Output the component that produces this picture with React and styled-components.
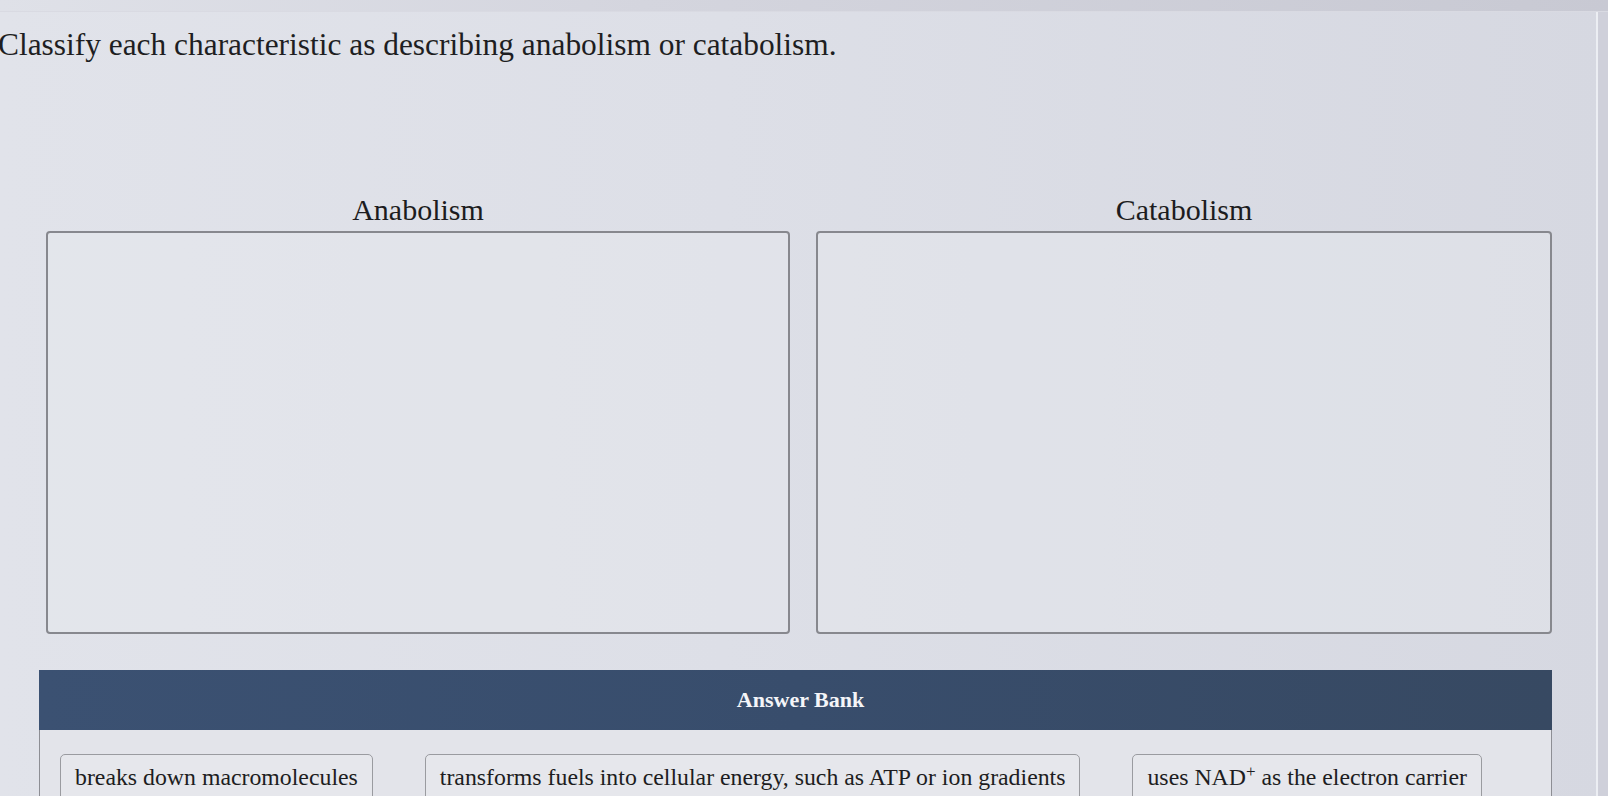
import React from "react";
import styled, { createGlobalStyle } from "styled-components";

const Global = createGlobalStyle`
  html, body { margin: 0; padding: 0; }
  body {
    background: #dcdee6;
    font-family: "Liberation Serif", "Times New Roman", serif;
    color: #1c1c1f;
  }
`;

const Screen = styled.div`
  width: 1608px;
  height: 796px;
  overflow: hidden;
  display: flex;
  flex-direction: column;
  background: linear-gradient(90deg, #e1e3ea 0%, #dddfe7 45%, #d6d8e1 100%);
`;

const TopBand = styled.div`
  height: 11px;
  flex: none;
  background: linear-gradient(90deg, #dfe1e8 0%, #d4d5de 40%, #c8c9d3 100%);
  border-bottom: 1px solid #d9dae2;
`;

const Body = styled.div`
  flex: 1;
  display: flex;
  min-height: 0;
`;

const Page = styled.main`
  flex: 1;
  display: flex;
  flex-direction: column;
  min-width: 0;
`;

const Edge = styled.div`
  width: 10px;
  flex: none;
  border-left: 2px solid #eceef3;
  background: #cfd0da;
`;

const Prompt = styled.h1`
  margin: 15px 0 0 -2px;
  font-size: 31.4px;
  line-height: 36px;
  font-weight: 400;
  color: #1e1e22;
  white-space: nowrap;
`;

const Bins = styled.div`
  margin: 130px 0 0 46px;
  width: 1506px;
  display: grid;
  grid-template-columns: 744px 736px;
  column-gap: 26px;
`;

const Bin = styled.section`
  display: flex;
  flex-direction: column;
  align-items: center;
  gap: 4px;
`;

const BinLabel = styled.h2`
  margin: 0;
  font-size: 30px;
  line-height: 34px;
  font-weight: 400;
  color: #1c1c20;
`;

const DropZone = styled.div`
  align-self: stretch;
  height: 399px;
  border: 2px solid #87888e;
  border-radius: 4px;
  background: rgba(230, 232, 238, 0.45);
`;

const Bank = styled.section`
  margin: 36px 0 0 39px;
  width: 1513px;
  display: flex;
  flex-direction: column;
`;

const BankHeader = styled.div`
  height: 60px;
  display: flex;
  align-items: center;
  justify-content: center;
  background: linear-gradient(90deg, #3b5172 0%, #384d6c 50%, #374962 100%);
  color: #f4f5f8;
  font-size: 22px;
  font-weight: 700;
  padding-left: 10px;
`;

const BankBody = styled.div`
  display: flex;
  flex-wrap: wrap;
  align-items: flex-start;
  gap: 20px 52px;
  padding: 24px 20px 20px;
  border: 1px solid #8d8e94;
  border-top: none;
  background: #e3e4ea;
  height: 120px;
`;

const Chip = styled.div`
  padding: 8px 14px 10px;
  border: 1px solid #9a9ba0;
  border-radius: 5px;
  background: #e6e7ec;
  font-size: 23.8px;
  line-height: 28px;
  color: #1d1d21;
  white-space: nowrap;
`;

const Sup = styled.sup`
  font-size: 17px;
  line-height: 0;
  vertical-align: 8px;
`;

export default function App() {
  return (
    <>
      <Global />
      <Screen>
        <TopBand />
        <Body>
          <Page>
            <Prompt>Classify each characteristic as describing anabolism or catabolism.</Prompt>
            <Bins>
              <Bin>
                <BinLabel>Anabolism</BinLabel>
                <DropZone />
              </Bin>
              <Bin>
                <BinLabel>Catabolism</BinLabel>
                <DropZone />
              </Bin>
            </Bins>
            <Bank>
              <BankHeader>Answer Bank</BankHeader>
              <BankBody>
                <Chip>breaks down macromolecules</Chip>
                <Chip>transforms fuels into cellular energy, such as ATP or ion gradients</Chip>
                <Chip>
                  uses NAD<Sup>+</Sup> as the electron carrier
                </Chip>
              </BankBody>
            </Bank>
          </Page>
          <Edge />
        </Body>
      </Screen>
    </>
  );
}
